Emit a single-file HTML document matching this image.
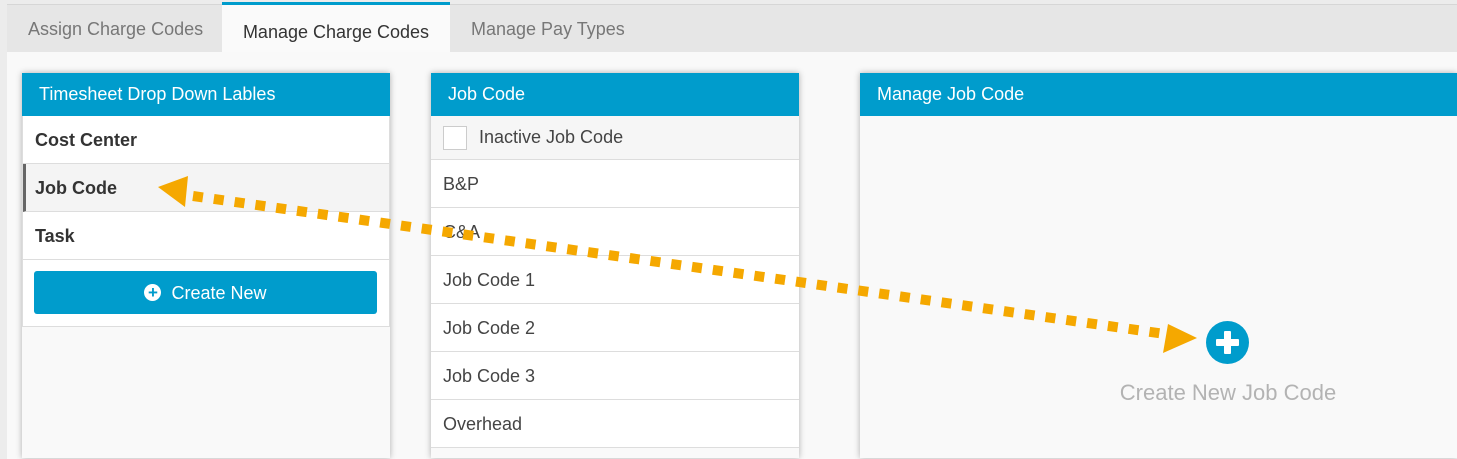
<!DOCTYPE html>
<html><head><style>
html,body{margin:0;width:1457px;height:459px;overflow:hidden}
body{background:#ececec;font-family:"Liberation Sans",sans-serif;position:relative}
.tabs{position:absolute;left:7px;top:4px;right:0;height:48px;background:#e6e6e6;border-top:1px solid #d6d6d6}
.tab{position:absolute;top:0;height:48px;line-height:48px;font-size:18px;color:#777}
.tab.act{background:#fafafa;color:#333;border-top:3px solid #009ccc;top:-3px;height:51px;line-height:54px;text-align:center}
.content{position:absolute;left:7px;top:52px;right:0;bottom:0;background:#f9f9f9}
.panel{position:absolute;top:73px;height:385px;overflow:hidden;background:#f9f9f9;box-shadow:0 0 6px rgba(0,0,0,.3)}
.hdr{height:43px;background:#009ccc;color:#fff;font-size:18px;line-height:42px;padding-left:17px}
.row{height:47px;border-bottom:1px solid #ddd;background:#fff;line-height:49px;padding-left:12px;font-size:18px;color:#444}
.b{font-weight:bold;color:#333}
</style></head><body>
<div class="tabs">
<div class="tab" style="left:21px">Assign Charge Codes</div>
<div class="tab act" style="left:215px;width:228px">Manage Charge Codes</div>
<div class="tab" style="left:464px">Manage Pay Types</div>
</div>
<div class="content"></div>
<div class="panel" style="left:22px;width:368px">
<div class="hdr">Timesheet Drop Down Lables</div>
<div style="border:1px solid #ddd;border-top:0;background:#fff">
<div class="row b">Cost Center</div>
<div class="row b" style="background:#f4f4f4;border-left:3px solid #666;padding-left:9px">Job Code</div>
<div class="row b">Task</div>
<div style="height:66px;background:#fff;position:relative"><div style="position:absolute;left:11px;top:11px;width:343px;height:43px;background:#009ccc;border-radius:3px;color:#fff;font-size:18px;line-height:45px;text-align:center"><span style="display:inline-block;width:17px;height:17px;border-radius:50%;background:#fff;color:#009ccc;font-size:17px;line-height:17px;font-weight:bold;vertical-align:1px;margin-right:10px">+</span>Create New</div></div>
</div></div>
<div class="panel" style="left:431px;width:368px">
<div class="hdr">Job Code</div>
<div class="row" style="height:43px;line-height:43px;background:#f6f6f6"><span style="display:inline-block;width:22px;height:22px;border:1px solid #ccc;background:#fff;vertical-align:middle;margin-right:12px"></span>Inactive Job Code</div>
<div class="row">B&amp;P</div><div class="row">C&amp;A</div><div class="row">Job Code 1</div><div class="row">Job Code 2</div><div class="row">Job Code 3</div><div class="row">Overhead</div>
</div>
<div class="panel" style="left:860px;width:597px">
<div class="hdr">Manage Job Code</div>
<div style="position:absolute;left:346px;top:248px;width:43px;height:43px;border-radius:50%;background:#009ccc"><div style="position:absolute;left:10px;top:18px;width:23px;height:7px;background:#fff;border-radius:1px"></div><div style="position:absolute;left:18px;top:10px;width:7px;height:23px;background:#fff;border-radius:1px"></div></div>
<div style="position:absolute;left:0;width:736px;top:307px;text-align:center;font-size:22px;color:#b3b3b3">Create New Job Code</div>
</div>
<svg style="position:absolute;left:0;top:0" width="1457" height="459">
<line x1="193" y1="196" x2="1165" y2="334" stroke="#f5a800" stroke-width="10" stroke-dasharray="10 11"/>
<polygon points="158,187 188,176 185,207" fill="#f5a800"/>
<polygon points="1197,338 1168,324 1163,353" fill="#f5a800"/>
</svg>
</body></html>
